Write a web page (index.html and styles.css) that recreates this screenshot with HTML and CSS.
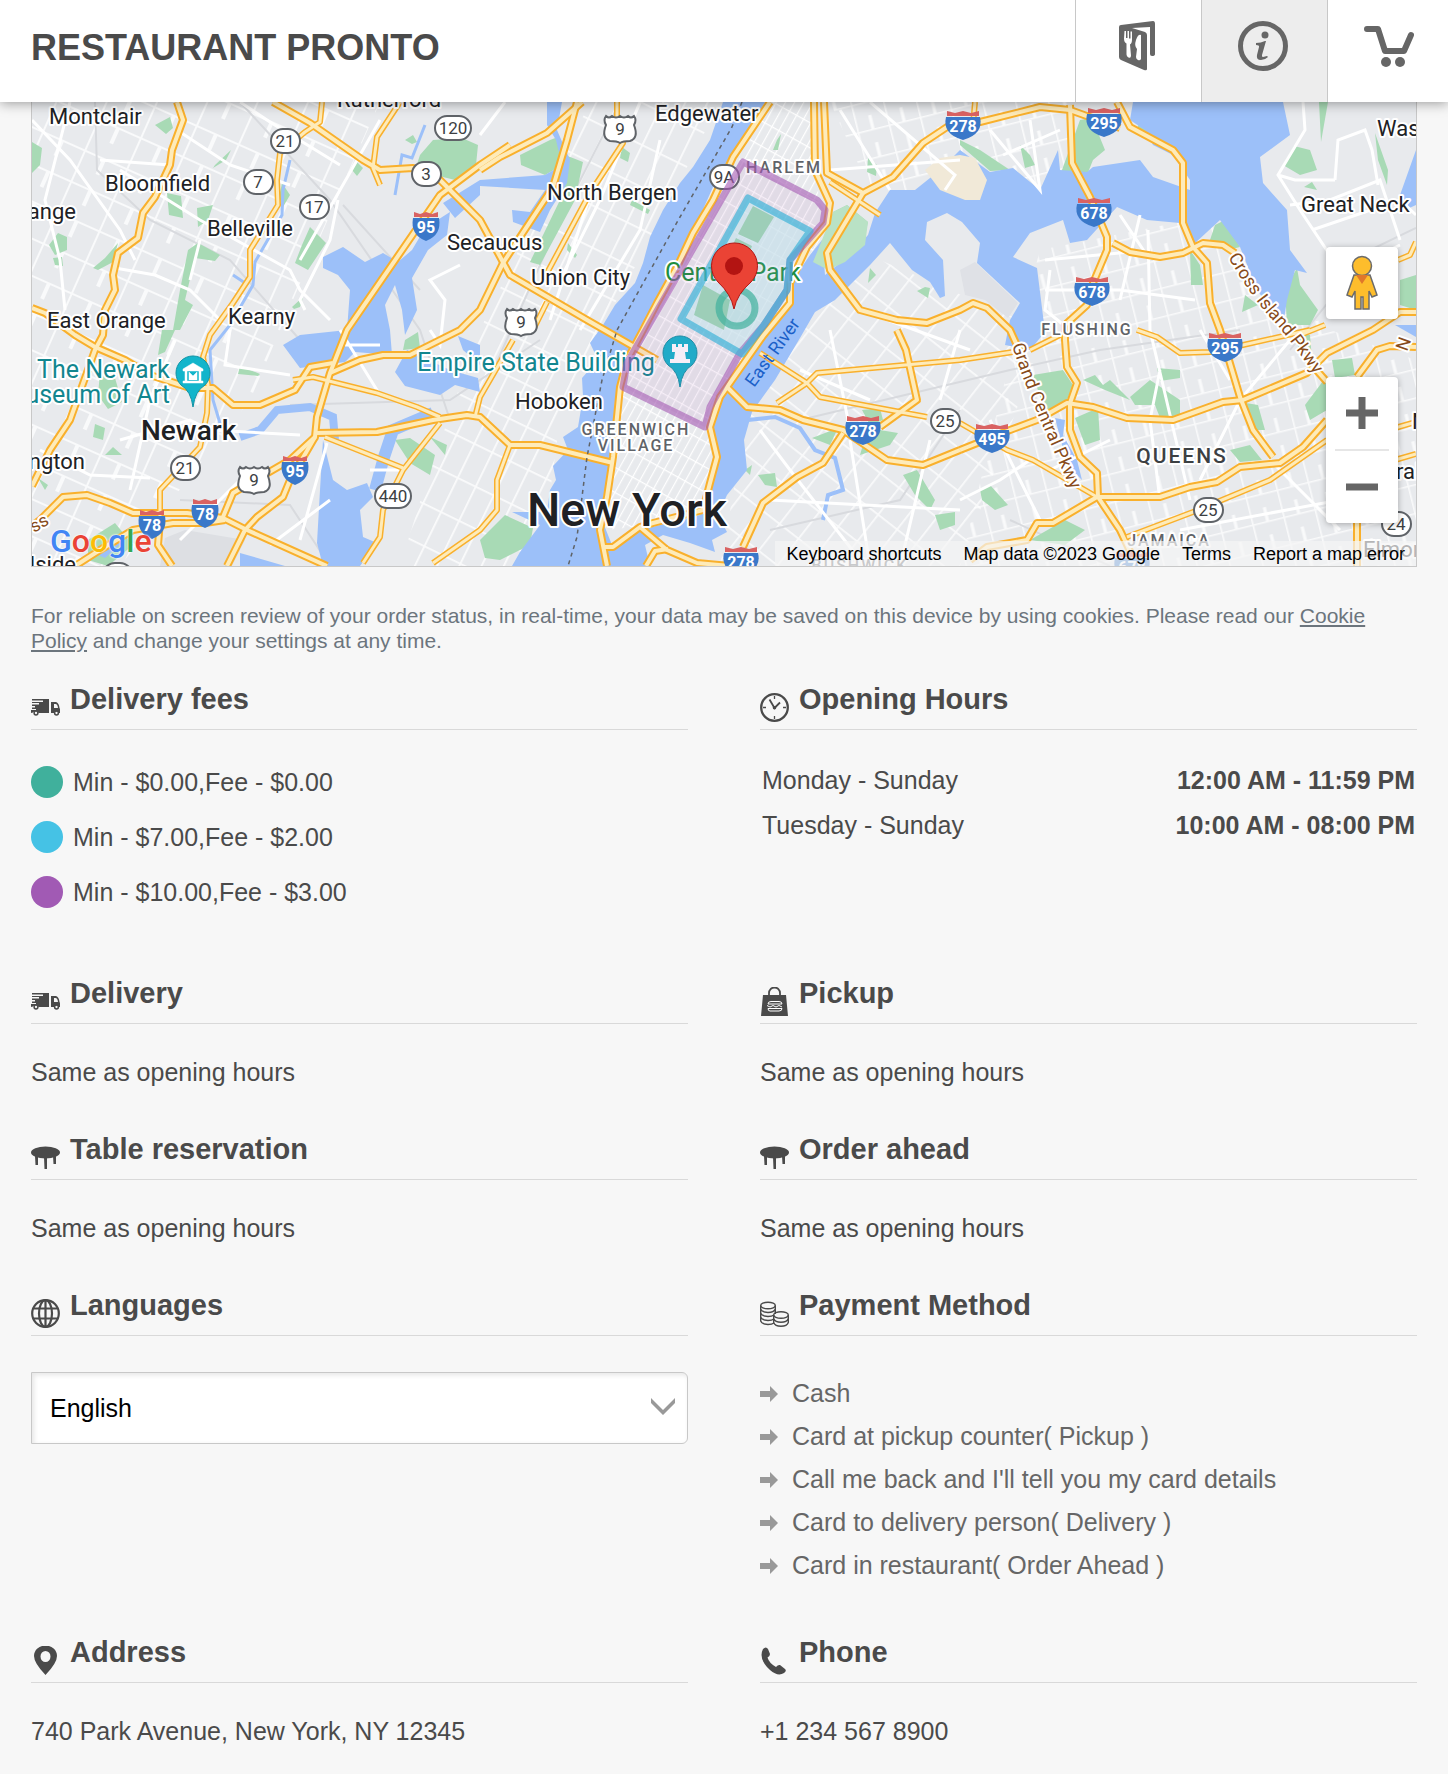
FILE: index.html
```
<!DOCTYPE html>
<html lang="en">
<head>
    <meta charset="UTF-8">
    <meta name="viewport" content="width=device-width, initial-scale=1.0">
    <title>Restaurant Pronto</title>
    <link rel="stylesheet" href="styles.css">
</head>
<body>
    <header class="top-bar">
        <h1>RESTAURANT PRONTO</h1>
        <nav class="top-nav">
            <a href="#menu" aria-label="Menu">
                <svg width="50" height="50" viewBox="0 0 50 50">
                    <path d="M7 6 Q7 4 9 4 L41 0 Q43 0 43 3 V33 Q43 35 40 35 Q38 35 38 33 V6 L20 7 L33 11 Q35 12 35 14 V48 Q35 50 32 49 L9 39 Q7 38 7 36 Z"/>
                    <path class="cut" d="M12.500 10 h1.500 v7 h1.500 v-7 h1.500 v7.500 h1.500 v-7 h1.500 v8 q0 4 -2 5 l1 11 q0 3 -2.500 2 q-2 -1 -2 -3 v-11 q-2.500 -1 -2.500 -5 z"/>
                    <path class="cut" d="M29 14 v24 q-1 2 -3 1 q-2 -1 -2 -3 l1 -8 q-3 -3 -1 -9 q2 -6 5 -5 z"/>
                </svg>
            </a>
            <a href="#info" class="active" aria-label="Info">
                <svg width="50" height="50" viewBox="0 0 50 50">
                    <circle cx="25" cy="25" r="22.500" fill="none" stroke="#666" stroke-width="5"/>
                    <circle cx="27" cy="14" r="3.500"/>
                    <path d="M18 22 q5 0 9 -2 h1 l-4 14 q-.5 2 1 2 q2 -.3 4 -1 l1 1 q-3 3 -7 3 q-5 0 -4 -5 l2 -8 q.5 -2 -3 -2 z"/>
                </svg>
            </a>
            <a href="#cart" aria-label="Cart">
                <svg width="50" height="50" viewBox="0 0 50 50">
                    <path d="M3 8 H14 L21 30 H40 L47 14" fill="none" stroke="#666" stroke-width="6" stroke-linecap="round" stroke-linejoin="round"/>
                    <circle cx="22" cy="41" r="5"/>
                    <circle cx="36" cy="41" r="5"/>
                </svg>
            </a>
        </nav>
    </header>

    <main class="container">
        <div class="map">
            <svg class="map-canvas" viewBox="32 102 1384 464" preserveAspectRatio="xMidYMid slice" role="img" aria-label="Delivery area map">
                <defs>
                    <pattern id="gridManhattan" width="8" height="22" patternUnits="userSpaceOnUse" patternTransform="rotate(29)">
                        <path d="M0 0H8M0 0V22" stroke="#fff" stroke-width="2.400"/>
                    </pattern>
                    <pattern id="gridWest" width="46" height="34" patternUnits="userSpaceOnUse" patternTransform="rotate(24)">
                        <path d="M0 0H46M0 0V34M22 0V18" stroke="#fff" stroke-width="4" fill="none"/>
                    </pattern>
                    <pattern id="gridHudson" width="20" height="38" patternUnits="userSpaceOnUse" patternTransform="rotate(26)">
                        <path d="M0 0H20M0 0V38" stroke="#fff" stroke-width="3.500" fill="none"/>
                    </pattern>
                    <pattern id="gridQueens" width="32" height="28" patternUnits="userSpaceOnUse" patternTransform="rotate(-14)">
                        <path d="M0 0H32M0 0V28M16 14V28" stroke="#fff" stroke-width="3.200" fill="none"/>
                    </pattern>
                    <pattern id="gridBrooklyn" width="24" height="34" patternUnits="userSpaceOnUse" patternTransform="rotate(38)">
                        <path d="M0 0H24M0 0V34" stroke="#fff" stroke-width="3.400" fill="none"/>
                    </pattern>
                    <!-- highways, drawn twice: casing and fill -->
                    <g id="highways">
                        <path d="M177 102 183 120 172 150 170 165 155 197 143 213 138 238 118 253 113 275 115 290 105 310 103 335 95 350 70 420 50 450 32 486"/>
                        <path d="M32 308 45 313 75 335 95 347 125 360 150 375 190 388 213 388 233 405 260 405 295 390 310 367 333 363"/>
                        <path d="M510 145 480 165 440 195 347 330 330 373 317 417 315 437 290 460 233 493 223 517"/>
                        <path d="M315 437 290 480 283 497 257 517 245 530 227 566"/>
                        <path d="M32 526 40 520 63 497 87 495 110 503 133 513 187 513 223 518 247 530 327 566"/>
                        <path d="M75 566 100 550 133 530 173 523 205 523 225 520"/>
                        <path d="M172 566 158 545 160 520"/>
                        <path d="M315 433 377 432 433 420 467 415 480 417 510 445 540 445 613 463"/>
                        <path d="M330 373 360 360 383 355 410 355 460 330 480 310 503 263 553 187 567 140 577 102"/>
                        <path d="M273 102 310 123 363 160 380 170 413 168 440 180 480 220 510 275 587 320 657 360"/>
                        <path d="M480 170 500 157 547 133 582 102"/>
                        <path d="M770 102 733 157 713 200 693 233 677 267 657 303 643 330 627 360 620 387 613 457 607 497 600 530 607 566"/>
                        <path d="M814 102 815 170 830 203 827 223 807 247 790 283 790 303 763 336 720 397 710 427 717 457 710 483 703 510 653 523 640 527 613 547 603 547"/>
                        <path d="M640 527 667 550 697 563 730 566"/>
                        <path d="M646 566 655 551 668 549"/>
                        <path d="M824 102 827 173 863 193 893 177 923 143 947 127 980 122 1040 107 1070 110 1120 128"/>
                        <path d="M863 193 827 253 830 270 860 310 897 320 927 323 960 310 973 303 987 308 1010 330 1020 352"/>
                        <path d="M1070 105 1072 163 1090 197 1107 237 1107 250 1093 283 1087 305 1065 325 1065 340 1067 367 1077 383 1070 403 1070 430 1080 457 1097 473 1098 497 1120 530 1137 566"/>
                        <path d="M1117 102 1130 127 1173 150 1183 163 1183 223 1193 247 1207 263 1210 303 1220 330 1240 397 1253 430 1273 457"/>
                        <path d="M1113 243 1130 252 1160 257 1183 253 1203 243 1223 245 1235 253"/>
                        <path d="M960 450 1010 430 1037 420 1067 403 1093 407 1127 418 1173 420 1223 402 1243 400 1307 373 1327 353 1373 330 1400 312 1416 312"/>
                        <path d="M970 560 987 547 1027 540 1037 523 1053 523 1097 497 1160 497 1190 487 1217 482 1240 467 1280 463 1303 447 1327 420"/>
                        <path d="M727 387 747 407 780 410 803 420 843 430 887 460 923 465 960 450"/>
                        <path d="M843 433 823 463 797 477 763 503 743 547"/>
                        <path d="M897 330 906 350 917 400 880 427"/>
                        <path d="M1312 365 1327 382"/>
                        <path d="M1357 377 1377 350 1390 346 1416 347M1357 523V566"/>
                    </g>
                    <g id="arterials">
                        <path d="M322 102 320 122 305 132 280 153 277 180 278 205 250 250 250 277 233 303 210 335 203 357 208 385 207 413 200 447 160 490 160 520"/>
                        <path d="M400 102 377 137 373 168 380 185"/>
                        <path d="M617 102V120L623 143 590 193 547 273"/>
                        <path d="M293 380 313 377 377 393 417 407 440 417"/>
                        <path d="M440 423 403 470 383 510 380 537 363 563M325 437 403 468"/>
                        <path d="M513 340 480 397 475 417M510 445 497 480 497 510 480 530 433 563"/>
                        <path d="M760 353 807 383 820 397 927 417M777 403 807 383 817 373 960 360 1013 352"/>
                        <path d="M960 423 1007 450 1033 460 1097 497"/>
                        <path d="M1030 350 1060 335M1137 330 1157 337 1180 353 1210 352 1243 345 1310 330"/>
                        <path d="M1127 537 1193 512 1270 480 1327 440"/>
                        <path d="M1398 260 1410 255 1416 242M1300 335 1325 325M1395 428 1416 422M1395 460 1416 454"/>
                        <path d="M830 182 880 215M975 102 973 125M533 330 547 302"/>
                    </g>
                    <g id="ushield">
                        <path d="M-14 -13 Q-11 -10 -8 -13 Q-4 -10 0 -13 Q4 -10 8 -13 Q11 -10 14 -13 Q17 -9 14 -4 Q19 9 10 12 Q3 12 0 14 Q-3 12 -10 12 Q-19 9 -14 -4 Q-17 -9 -14 -13 Z"/>
                    </g>
                    <g id="shield2">
                        <path d="M-13 -8 H13 Q16 9 0 15 Q-16 9 -13 -8 Z" fill="#3a78c9"/>
                        <path d="M-12 -9 L-12 -14 L-6 -12 L0 -14 L6 -12 L12 -14 L12 -9 Z" fill="#d96262"/>
                    </g>
                    <g id="shield3">
                        <path d="M-17 -8 H17 Q21 9 0 15 Q-21 9 -17 -8 Z" fill="#3a78c9"/>
                        <path d="M-16 -9 L-16 -14 L-8 -12 L0 -14 L8 -12 L16 -14 L16 -9 Z" fill="#d96262"/>
                    </g>
                    <rect id="pill" x="-14" y="-12" width="29" height="24" rx="12"/>
                    <rect id="pillWide" x="-18" y="-12" width="36" height="24" rx="12"/>
                    <path id="crossIsland" d="M1228 257 Q1252 298 1270 317 T1318 380"/>
                    <path id="grandCentral" d="M1012 345 C1024 385 1040 420 1072 492"/>
                </defs>

                <rect x="0" y="0" width="1500" height="700" fill="#e8eaed"/>

                <!-- street grids -->
                <path d="M32 102H380L310 260 250 400 120 566H32Z" fill="url(#gridWest)" opacity=".75"/>
                <path d="M590 102H720L650 240 600 330 560 420 540 566H400L430 470 480 330Z" fill="url(#gridHudson)" opacity=".8"/>
                <path d="M770 102H815L820 240 745 350 705 520 605 530 625 370Z" fill="url(#gridManhattan)"/>
                <path d="M830 102H1070V190H870Z" fill="url(#gridQueens)" opacity=".8"/>
                <path d="M790 330 880 260 1020 320V400L960 566H720L750 400Z" fill="url(#gridBrooklyn)" opacity=".75"/>
                <path d="M1040 250 1240 210 1330 330 1416 360V566H960L1000 400Z" fill="url(#gridQueens)" opacity=".75"/>

                <g class="rail">
                    <path d="M95 102 97 170 150 220 230 260 300 340M240 102 330 200 420 330 450 420"/>
                    <path d="M343 205 420 290M620 102 560 220 480 400M290 405 450 400 540 340M180 500 290 505 330 566"/>
                    <path d="M800 420 1010 370 1100 350 1240 330M1010 520 1110 566M1416 228 1370 250 1290 350"/>
                    <path d="M770 530 900 500 960 410"/>
                </g>

                <!-- parks -->
                <g class="park">
                    <path d="M32 142 42 148 40 165 32 173ZM155 125 170 117 173 128 166 134ZM167 193 181 196 183 218 169 215ZM197 208 213 205 208 220 198 227ZM58 233 67 237 67 250 55 255 49 245ZM53 258 62 257 63 266 55 265ZM215 165 231 150 226 160 213 168ZM188 250 198 243 220 255 215 261 195 258 185 300 193 305 180 330H173L180 290ZM93 268 105 258 118 243 113 262 98 270ZM310 227 326 243 308 270 295 263 302 245ZM282 183 290 195 283 207 279 197Z"/>
                    <path d="M433 140 462 138 478 145 476 165 455 180 415 170 420 155ZM405 140 413 135 417 142 412 144ZM357 162 363 168 357 176 352 170ZM292 307 303 297 300 307 294 309Z"/>
                    <path d="M100 372 115 378 122 402 108 409 98 395ZM95 424 105 428 103 440 93 437ZM113 447 122 455 105 455ZM240 366 260 374 258 376 238 374ZM162 330H175L165 352 158 355ZM88 540 115 523 133 545 108 566 88 560ZM38 478 48 485 45 490Z"/>
                    <path d="M405 340 418 332 420 348 403 350ZM395 440 410 438 435 455 430 475 410 463ZM430 437 447 445 445 455ZM480 540 505 515 533 528 530 545 500 560 485 558Z"/>
                    <path d="M520 155 550 140 558 137 562 165 545 175 521 165ZM565 155 583 162 575 200 540 265 530 262 560 200ZM622 147 630 153 628 162 620 158ZM632 200 650 210 648 214 630 205ZM568 243 577 255 575 258 567 250Z"/>
                    <path d="M777 140 781 134 778 150 773 150ZM868 158 877 165 876 176 867 172ZM833 212 847 205 868 222 865 235 847 247 835 232ZM813 258 825 253 828 265 818 270ZM870 268 876 275 868 283ZM925 287 930 288 928 298 917 291Z"/>
                    <path d="M1080 120 1092 118 1105 150 1093 160 1085 180 1065 200 1062 170ZM960 140 980 150 1010 170 990 171 960 145ZM1020 145 1030 155 1035 165 1025 168ZM1140 122 1150 121 1150 135 1135 132Z"/>
                    <path d="M1294 146 1310 150 1317 170 1300 175 1283 165ZM1319 102H1328L1321 142ZM1375 133 1388 170 1387 185 1378 160ZM1304 187 1312 182 1317 190ZM1215 225 1225 220 1240 247 1228 250 1210 240ZM1190 250 1200 265 1203 285 1191 285ZM1245 295 1258 305 1242 312ZM1285 290 1297 268 1300 285 1318 310 1310 325 1287 325Z"/>
                    <path d="M1033 375 1063 370 1073 385 1065 405 1045 412ZM1075 418 1098 408 1100 440 1085 445ZM1083 380 1095 375 1103 385 1110 380 1130 400 1105 390ZM1130 397 1150 380 1180 400V415L1160 418 1155 405 1135 405ZM1157 368 1180 370V378L1160 381ZM1230 450 1250 445 1262 460 1240 462ZM1305 405 1320 385 1327 375V410L1310 420ZM1332 360 1352 358 1355 375 1335 378ZM1400 280 1416 275V310L1400 305ZM980 490 990 485 1008 505 995 510 982 500ZM1030 540 1065 520 1085 530 1065 545ZM1240 402 1258 405 1265 430 1255 430Z"/>
                    <path d="M812 438 838 428 830 445ZM862 410 880 408 883 420 870 425ZM880 430 898 433 890 445 860 455 862 448ZM745 470 752 465 750 475ZM758 475 775 473 777 487 765 485ZM903 475 917 470 935 500 930 510 915 495ZM935 515 955 512V525L940 530ZM1290 330 1310 335 1312 360 1300 350Z"/>
                </g>

                <!-- water -->
                <g class="water">
                    <path d="M723 102 710 140 693 167 680 183 663 210 650 237 643 263 635 283 615 305 603 325 590 343 598 360 582 378 583 397 578 427 563 437 568 450 553 466 556 480 550 490 547 512 512 512 540 525 520 552 512 566H650L645 545 663 535 690 543 715 552 712 540 727 532 718 515 727 495 747 470 744 440 752 412 775 380 800 338 815 312 835 300 870 265 890 243 912 270 930 282 940 298 945 296 943 260 925 240 927 222 947 213 962 222 980 243 977 263 1020 303 1010 320 1005 345 1030 350 1045 332 1037 268 1013 257 1030 233 1063 220 1070 243 1087 240 1117 207 1147 220 1180 223 1193 245 1220 220 1240 247 1257 290 1283 325 1287 300 1295 270 1307 273 1290 250 1287 210 1263 183 1260 157 1290 135 1283 102H1133L1130 120 1145 130 1153 145 1173 155 1190 180 1190 190 1153 177 1140 160 1093 167 1087 172 1060 170 1058 150 1040 190 1013 168 990 172 960 150 940 170 915 190 890 190 875 213 868 235 850 255 825 275 822 240 810 255 793 280 788 305 757 350 727 387 713 407 707 430 718 455 710 490 700 515 640 530 612 545 602 520 603 500 612 450 615 400 625 370 640 335 667 290 680 253 697 223 713 187 740 147 765 102Z"/>
                    <path d="M323 257 343 247 365 262 383 253 398 262 412 250 425 228 450 212 447 235 428 250 412 278 417 310 405 335 402 310 395 285 385 305 390 330 392 355 355 352 345 362 300 368 283 345 300 335 347 330 350 290 338 275 323 268Z"/>
                    <path d="M407 350 450 370 478 378 480 392 455 385 440 395 405 386 395 372Z"/>
                    <path d="M323 440 333 480 347 490 367 483 373 497 360 510 363 537 377 543 360 566H323L317 543 320 490Z"/>
                    <path d="M443 203 480 180V195L455 218ZM458 336 480 345V365L463 350ZM547 102H562L557 130 570 160 567 183 550 210 540 232 513 222 512 210 530 212 545 190 480 186V180L545 175 562 165 556 140 547 125ZM1055 418 1065 420 1063 435 1077 460 1082 480 1072 470 1062 445ZM1400 195 1416 150V205L1405 210ZM1395 325H1416V337ZM92 552 120 538 125 540 105 558ZM240 553 285 566H240Z"/>
                </g>
                <g class="stream">
                    <path stroke-width="8" d="M240 437 260 430 277 410 310 407 333 417 335 440"/>
                    <path stroke-width="12" d="M433 413 393 430 384 457 375 490"/>
                    <path stroke-width="3" d="M425 125 412 158 402 155 395 195M290 160 283 190 282 215 255 262 253 285 230 325 210 350 213 400 222 430M233 275 248 285"/>
                    <path stroke-width="4" d="M748 420 775 417 800 428 815 450 835 458 843 490 828 495 823 520"/>
                </g>

                <!-- islands and airport -->
                <path d="M960 155 975 158 987 180 980 200 965 200 940 190 925 170 940 158Z" fill="#f1e9d8"/>
                <path d="M833 212 847 205 868 222 865 245 845 262 828 270 813 262 820 245Z" fill="#b9e2c5"/>
                <path d="M960 270 975 262 1018 303 1008 318 985 300 965 295Z" fill="#dfe1e6"/>
                <path d="M165 538 185 530 245 540 232 566H160Z" fill="#dddfe3"/>

                <!-- local streets -->
                <g class="street">
                    <path d="M32 120 70 160 120 230 135 260M70 102 45 200 60 260 65 310M100 160 170 165M120 170 200 220 290 270 300 290 330 320M180 132 230 165 290 185M240 102 270 122 340 165M200 240 190 280M115 268 155 275 190 290 220 320M380 120 300 260M338 200 330 240 300 300 305 310"/>
                    <path d="M230 330 225 365 290 375M120 440 190 420 210 430 300 435M40 450 90 475 150 478M130 490 150 400 175 340M180 540 250 470M327 443 300 540M340 330 380 395M370 470 400 470M270 545 330 500M345 345 380 345"/>
                    <path d="M480 135 505 102M430 330 440 345 445 300 430 280 460 265M640 102 600 200 560 280M660 140 640 230 580 330M590 195 550 320"/>
                    <path d="M840 110 890 190M870 102 955 175 945 190M830 170 960 160M990 130 1040 190 1030 120M1003 155 1060 130"/>
                    <path d="M1303 102 1305 130 1278 175 1300 210 1340 270M1278 175 1295 180 1335 180M1290 205 1330 200 1380 180 1400 240M1335 180 1338 140 1365 130 1372 150 1378 185M1312 230 1400 200 1416 215M1340 275 1400 245"/>
                    <path d="M1045 260 1130 252M1050 270 1045 310 1070 330M1045 290 1120 290 1195 300M1140 215 1120 300M1148 230 1150 330 1190 500M1120 215 1150 260M1160 370 1150 420 1160 500M1200 330 1230 380M1290 340 1240 400 1200 480M1270 460 1340 530M960 500 1000 480 1030 460M990 420 1020 480 1040 520M1110 440 1050 470M1180 530 1340 500"/>
                    <path d="M760 430 790 470 860 560M850 440 870 566M770 500 960 510M930 440 900 566M800 370 870 400M830 330 850 430M860 310 970 350M960 330 940 400"/>
                </g>

                <g class="casing"><use href="#arterials" stroke-width="6"/><use href="#highways" stroke-width="8"/></g>
                <g class="fill"><use href="#arterials" stroke-width="3"/><use href="#highways" stroke-width="4"/></g>
                <path d="M742 102 732 127 680 217 617 330 602 380 587 457 577 537 568 566" fill="none" stroke="#5f6368" stroke-width="1.500" stroke-dasharray="4 4"/>

                <!-- Central Park area under the labels -->
                <path d="M748 200 808 232 790 260 787 290 742 353 685 320Z" fill="#e6f7f7" fill-opacity=".6"/>
                <path d="M753 206 774 217 758 243 738 234ZM736 238 752 246 745 265 728 255ZM703 285 730 300 724 330 694 315Z" class="park"/>

                <!-- place names -->
                <g class="label">
                    <text x="49" y="124">Montclair</text>
                    <text x="105" y="191">Bloomfield</text>
                    <text x="207" y="236">Belleville</text>
                    <text x="76" y="219" text-anchor="end">Orange</text>
                    <text x="47" y="328">East Orange</text>
                    <text x="228" y="324">Kearny</text>
                    <text x="447" y="250">Secaucus</text>
                    <text x="337" y="107">Rutherford</text>
                    <text x="655" y="121">Edgewater</text>
                    <text x="547" y="200">North Bergen</text>
                    <text x="531" y="285">Union City</text>
                    <text x="515" y="409">Hoboken</text>
                    <text x="1301" y="212">Great Neck</text>
                    <text x="1377" y="136">Washington</text>
                    <text x="85" y="469" text-anchor="end">Irvington</text>
                    <text x="76" y="572" text-anchor="end">Hillside</text>
                    <text x="1396" y="479">ral Park</text>
                    <text x="1363" y="557">Elmont</text>
                    <text x="1412" y="429">New</text>
                </g>
                <g class="label label-poi">
                    <text x="37" y="378">The Newark</text>
                    <text x="170" y="403" text-anchor="end">Museum of Art</text>
                    <text x="417" y="371">Empire State Building</text>
                </g>
                <text class="label label-park" x="665" y="281">Central Park</text>
                <g class="label label-area">
                    <text x="636" y="435">GREENWICH</text>
                    <text x="636" y="451">VILLAGE</text>
                    <text x="784" y="173">HARLEM</text>
                    <text x="1087" y="335">FLUSHING</text>
                    <text x="1169" y="546">JAMAICA</text>
                    <text x="860" y="571">BUSHWICK</text>
                </g>
                <text class="label label-borough" x="1182" y="463">QUEENS</text>
                <text class="label label-town" x="141" y="440">Newark</text>
                <text class="label label-city" x="527" y="526">New York</text>
                <text class="label label-river" transform="translate(754 388) rotate(-54)">East River</text>
                <g class="label label-road">
                    <text><textPath href="#crossIsland">Cross Island Pkwy</textPath></text>
                    <text><textPath href="#grandCentral">Grand Central Pkwy</textPath></text>
                    <text transform="translate(34 533) rotate(-30)">ss</text>
                    <text transform="translate(1407 352) rotate(-70)">N</text>
                </g>

                <!-- route shields -->
                <g class="route">
                    <g transform="translate(285 141)"><use href="#pill"/><text y="6">21</text></g>
                    <g transform="translate(453 128)"><use href="#pillWide"/><text y="6">120</text></g>
                    <g transform="translate(426 174)"><use href="#pill"/><text y="6">3</text></g>
                    <g transform="translate(258 182)"><use href="#pill"/><text y="6">7</text></g>
                    <g transform="translate(314 207)"><use href="#pill"/><text y="6">17</text></g>
                    <g transform="translate(724 177)"><use href="#pill"/><text y="6">9A</text></g>
                    <g transform="translate(185 468)"><use href="#pill"/><text y="6">21</text></g>
                    <g transform="translate(393 496)"><use href="#pillWide"/><text y="6">440</text></g>
                    <g transform="translate(945 421)"><use href="#pill"/><text y="6">25</text></g>
                    <g transform="translate(1208 510)"><use href="#pill"/><text y="6">25</text></g>
                    <g transform="translate(1396 524)"><use href="#pill"/><text y="6">24</text></g>
                    <g transform="translate(620 129)"><use href="#ushield"/><text y="6">9</text></g>
                    <g transform="translate(521 322)"><use href="#ushield"/><text y="6">9</text></g>
                    <g transform="translate(254 480)"><use href="#ushield"/><text y="6">9</text></g>
                    <use href="#pill" x="117" y="575"/>
                </g>
                <g class="interstate">
                    <g transform="translate(426 226)"><use href="#shield2"/><text y="7">95</text></g>
                    <g transform="translate(295 470)"><use href="#shield2"/><text y="7">95</text></g>
                    <g transform="translate(152 524)"><use href="#shield2"/><text y="7">78</text></g>
                    <g transform="translate(205 513)"><use href="#shield2"/><text y="7">78</text></g>
                    <g transform="translate(963 125)"><use href="#shield3"/><text y="7">278</text></g>
                    <g transform="translate(863 430)"><use href="#shield3"/><text y="7">278</text></g>
                    <g transform="translate(741 561)"><use href="#shield3"/><text y="7">278</text></g>
                    <g transform="translate(1104 122)"><use href="#shield3"/><text y="7">295</text></g>
                    <g transform="translate(1225 347)"><use href="#shield3"/><text y="7">295</text></g>
                    <g transform="translate(1094 212)"><use href="#shield3"/><text y="7">678</text></g>
                    <g transform="translate(1092 291)"><use href="#shield3"/><text y="7">678</text></g>
                    <g transform="translate(992 438)"><use href="#shield3"/><text y="7">495</text></g>
                    <g transform="translate(1132 566)"><use href="#shield3"/><text y="7">678</text></g>
                </g>

                <!-- points of interest -->
                <g transform="translate(193 373)">
                    <path d="M0 34 Q-2 18 -12 12 A17 17 0 1 1 12 12 Q2 18 0 34Z" fill="#12b5cb" stroke="#1093a5"/>
                    <path d="M-10 -4 0 -10 10 -4V-2H-10ZM-8 -2H-6V8H-8ZM6 -2H8V8H6ZM-10 8H10V10H-10ZM-4 7V-1L0 3 4 -1V7" fill="#fff" stroke="#fff" stroke-width=".500"/>
                </g>
                <g transform="translate(680 353)">
                    <path d="M0 34 Q-2 18 -12 12 A17 17 0 1 1 12 12 Q2 18 0 34Z" fill="#12b5cb" stroke="#1093a5"/>
                    <path d="M-8 -9H-4V-6H-2V-9H2V-6H4V-9H8V-1H5L6 6H10V10H-10V6H-6L-5 -1H-8Z" fill="#fff"/>
                </g>

                <!-- delivery zones -->
                <g stroke-width="7" stroke-linejoin="round">
                    <path d="M743 162 817 200 825 210 823 223 808 240 790 260 787 290 764 325 740 353 710 407 705 427 623 387 627 363Z" fill="#a359b3" fill-opacity=".1" stroke="#a359b3" stroke-opacity=".6"/>
                    <path d="M748 198 810 231 790 260 787 290 764 325 742 354 681 319Z" fill="#45e2e5" fill-opacity=".1" stroke="#3fb4d8" stroke-opacity=".7"/>
                    <circle cx="737" cy="308" r="18" fill="#40b09c" fill-opacity=".1" stroke="#40b09c" stroke-opacity=".7"/>
                </g>
                <path d="M734 309 Q731 294 718 282 A23 23 0 1 1 751 282 Q737 294 734 309Z" fill="#ea4335" stroke="#b31412"/>
                <circle cx="734" cy="266" r="9" fill="#b31412"/>
            </svg>

            <a class="map-logo" href="#google"><span class="g-blue">G</span><span class="g-red">o</span><span class="g-yellow">o</span><span class="g-blue">g</span><span class="g-green">l</span><span class="g-red">e</span></a>

            <div class="map-controls">
                <button type="button" class="map-btn pegman" aria-label="Street View">
                    <svg width="32" height="56" viewBox="0 0 32 56">
                        <path d="M8 20H24L31 40 26 42 23 36V54H17V42H15V54H9V36L6 42 1 40Z" fill="#fdbd2c" stroke="#6b6b6b" stroke-width="1.500"/>
                        <circle cx="16" cy="11" r="9.500" fill="#fdbd2c" stroke="#6b6b6b" stroke-width="1.500"/>
                        <path d="M10 20H22L16 29Z" fill="#e0772a"/>
                    </svg>
                </button>
                <div class="zoom-box">
                    <button type="button" class="map-btn" aria-label="Zoom in">
                        <svg width="32" height="32" viewBox="0 0 32 32"><path d="M0 12.500H12.500V0H19.500V12.500H32V19.500H19.500V32H12.500V19.500H0Z"/></svg>
                    </button>
                    <span class="zoom-line"></span>
                    <button type="button" class="map-btn" aria-label="Zoom out">
                        <svg width="32" height="32" viewBox="0 0 32 32"><path d="M0 12.500H32V19.500H0Z"/></svg>
                    </button>
                </div>
            </div>

            <div class="map-footer">
                <button type="button">Keyboard shortcuts</button>
                <span>Map data ©2023 Google</span>
                <a href="#terms">Terms</a>
                <a href="#report">Report a map error</a>
            </div>
        </div>

        <p class="cookie-note">For reliable on screen review of your order status, in real-time, your data may be saved on this device by using cookies. Please read our <a href="#cookies">Cookie Policy</a> and change your settings at any time.</p>

        <div class="info-grid">
            <section>
                <h2>
                    <svg class="icon" viewBox="0 0 29 29"><use href="#icon-truck"/></svg>
                    Delivery fees
                </h2>
                <ul class="fees">
                    <li><span class="dot dot-green"></span>Min - $0.00,Fee - $0.00</li>
                    <li><span class="dot dot-blue"></span>Min - $7.00,Fee - $2.00</li>
                    <li><span class="dot dot-purple"></span>Min - $10.00,Fee - $3.00</li>
                </ul>
            </section>
            <section>
                <h2>
                    <svg class="icon" viewBox="0 0 29 29">
                        <circle cx="14.500" cy="14.500" r="13.300" fill="none" stroke="#4a4a4a" stroke-width="2.300"/>
                        <path d="M14.500 3V6M14.500 23V26M3 14.500H6M23 14.500H26" stroke="#4a4a4a" stroke-width="1.300"/>
                        <path d="M9.500 6.500 14.500 15 20 9.500" fill="none" stroke="#4a4a4a" stroke-width="1.800"/>
                        <circle cx="14.500" cy="14.800" r="1.800"/>
                    </svg>
                    Opening Hours
                </h2>
                <table class="hours">
                    <tr><th scope="row">Monday - Sunday</th><td>12:00 AM - 11:59 PM</td></tr>
                    <tr><th scope="row">Tuesday - Sunday</th><td>10:00 AM - 08:00 PM</td></tr>
                </table>
            </section>

            <section>
                <h2>
                    <svg class="icon" viewBox="0 0 29 29">
                        <g id="icon-truck">
                            <path d="M1 6H18V20H7.500A3 3 0 0 0 2 19.500L0 20V17H5V16H1V14.500H4V13H1V11.500H8V10H1V9H12V7.500H1Z"/>
                            <circle cx="5" cy="20" r="1.900" fill="none" stroke="#4a4a4a" stroke-width="1.500"/>
                            <path fill-rule="evenodd" d="M20 9H25Q28 10 28.500 15L29 16V20H27.500A2.500 2.500 0 0 0 23 20H20ZM23 11V15H27Q26.500 11 24.500 11Z"/>
                            <circle cx="25.500" cy="20" r="1.900" fill="none" stroke="#4a4a4a" stroke-width="1.500"/>
                        </g>
                    </svg>
                    Delivery
                </h2>
                <p>Same as opening hours</p>
            </section>
            <section>
                <h2>
                    <svg class="icon" viewBox="0 0 29 29">
                        <path d="M9 8V6A5.500 5.500 0 0 1 20 6V8" fill="none" stroke="#4a4a4a" stroke-width="1.800"/>
                        <path d="M3 8H26L28 29H1Z"/>
                        <path d="M8 17Q8 14.500 11 14.500H19Q22 14.500 22 17ZM7 18.500 10 20 13 18.500 16 20 19 18.500 22 20M8 21.500H22Q22 24 19 24H10Q8 24 8 21.500Z" fill="none" stroke="#fff" stroke-width="1"/>
                    </svg>
                    Pickup
                </h2>
                <p>Same as opening hours</p>
            </section>

            <section>
                <h2>
                    <svg class="icon" viewBox="0 0 29 29"><use href="#icon-table"/></svg>
                    Table reservation
                </h2>
                <p>Same as opening hours</p>
            </section>
            <section>
                <h2>
                    <svg class="icon" viewBox="0 0 29 29">
                        <g id="icon-table">
                            <ellipse cx="14.500" cy="9.500" rx="14.500" ry="6"/>
                            <path d="M4 13H7V22H4.500ZM13 14H16V26H13.500ZM22 13H25V21H22.500Z"/>
                        </g>
                    </svg>
                    Order ahead
                </h2>
                <p>Same as opening hours</p>
            </section>

            <section>
                <h2>
                    <svg class="icon" viewBox="0 0 29 29">
                        <g fill="none" stroke="#4a4a4a" stroke-width="2.200">
                            <circle cx="14.500" cy="14.500" r="13.300"/>
                            <ellipse cx="14.500" cy="14.500" rx="6.500" ry="13.300"/>
                            <path d="M14.500 1V28M3 9.500H26M3 19.500H26"/>
                        </g>
                    </svg>
                    <label for="language">Languages</label>
                </h2>
                <div class="select-box">
                    <select id="language">
                        <option>English</option>
                    </select>
                    <svg width="24" height="17" viewBox="0 0 24 17"><path d="M0 0 12 12 24 0V5L12 17 0 5Z"/></svg>
                </div>
            </section>
            <section>
                <h2>
                    <svg class="icon" viewBox="0 0 29 29">
                        <g fill="none" stroke="#4a4a4a" stroke-width="1.400">
                            <ellipse cx="8" cy="6.500" rx="7.300" ry="3.300"/>
                            <path d="M.700 6.500V22Q2 25.500 8 25.500Q12 25.500 14 24M15.300 6.500V15M.700 10Q2 13.500 8 13.500T15.300 10M.700 14Q2 17.500 8 17.500Q12 17.500 14 16M.700 18Q2 21.500 8 21.500Q12 21.500 14 20"/>
                            <ellipse cx="21" cy="16" rx="7.300" ry="3.300"/>
                            <path d="M13.700 16V23.500Q15 27.300 21 27.300T28.300 23.500V16M13.700 19.500Q15 23.300 21 23.300T28.300 19.500"/>
                        </g>
                    </svg>
                    Payment Method
                </h2>
                <ul class="payments">
                    <li><svg width="18" height="16" viewBox="0 0 18 16"><path id="arrow" d="M0 5H10V0L18 8 10 16V11H0Z"/></svg>Cash</li>
                    <li><svg width="18" height="16" viewBox="0 0 18 16"><use href="#arrow"/></svg>Card at pickup counter( Pickup )</li>
                    <li><svg width="18" height="16" viewBox="0 0 18 16"><use href="#arrow"/></svg>Call me back and I'll tell you my card details</li>
                    <li><svg width="18" height="16" viewBox="0 0 18 16"><use href="#arrow"/></svg>Card to delivery person( Delivery )</li>
                    <li><svg width="18" height="16" viewBox="0 0 18 16"><use href="#arrow"/></svg>Card in restaurant( Order Ahead )</li>
                </ul>
            </section>

            <section>
                <h2>
                    <svg class="icon" viewBox="0 0 29 29">
                        <path fill-rule="evenodd" d="M14.500 29Q3 17 3 10A11 10 0 0 1 26 10Q26 17 14.500 29ZM14.500 5A5 5.500 0 1 0 14.500 16A5 5.500 0 1 0 14.500 5Z"/>
                    </svg>
                    Address
                </h2>
                <p>740 Park Avenue, New York, NY 12345</p>
            </section>
            <section>
                <h2>
                    <svg class="icon" viewBox="0 0 29 29">
                        <path d="M3 3Q6 0 8 3L10 8Q10 10 7.500 11.500Q9 17 16 21Q18 18.500 20 19L25 23Q27 25 24 27Q18 31 10 24Q-2 13 3 3Z"/>
                    </svg>
                    Phone
                </h2>
                <p>+1 234 567 8900</p>
            </section>
        </div>
    </main>
</body>
</html>
```
FILE: styles.css
```
* {
    box-sizing: border-box;
}
body {
    margin: 0;
    background-color: #f7f7f7;
    color: #4a4a4a;
    font-family: "Liberation Sans", Arial, sans-serif;
    font-size: 25px;
    line-height: 30px;
}
h1, h2, p, ul {
    margin: 0;
    padding: 0;
}
ul {
    list-style: none;
}
svg {
    display: block;
    flex-shrink: 0;
}
button {
    padding: 0;
    border: none;
    background: none;
    font: inherit;
    color: inherit;
    cursor: pointer;
}

/* header */
.top-bar {
    position: sticky;
    top: 0;
    z-index: 10;
    display: flex;
    justify-content: space-between;
    height: 102px;
    background-color: white;
    box-shadow: 0 1px 12px rgba(0,0,0,0.4);
}
.top-bar h1 {
    padding: 28px 0 0 31px;
    font-size: 36px;
    line-height: 40px;
}
.top-nav {
    display: flex;
}
.top-nav a {
    display: flex;
    justify-content: center;
    width: 126px;
    padding: 21px 4px 0 0;
    border-left: 1px solid #c8c8c8;
    fill: #666;
}
.top-nav a:last-child {
    width: 121px;
    padding: 21px 0 0 2px;
}
.top-nav .active {
    background-color: #ededed;
}
.top-nav .cut {
    fill: white;
}

.container {
    padding: 0 31px 28px;
}

/* map */
.map {
    position: relative;
    height: 465px;
    border: 1px solid #c8c8c8;
    border-top: none;
    overflow: hidden;
    font-family: Roboto, sans-serif;
}
.map-canvas {
    width: 100%;
    height: 100%;
}
.park {
    fill: #a8dab5;
}
.water {
    fill: #9cc0f9;
}
.stream {
    fill: none;
    stroke: #9cc0f9;
}
.rail {
    fill: none;
    stroke: #d8dade;
    stroke-width: 2;
}
.street {
    fill: none;
    stroke: white;
    stroke-width: 3;
}
.casing {
    fill: none;
    stroke: #f9b02c;
    stroke-linejoin: round;
}
.fill {
    fill: none;
    stroke: #feebb9;
    stroke-linejoin: round;
}
.label {
    font-size: 22px;
    fill: #202124;
    stroke: white;
    stroke-width: 4px;
    stroke-linejoin: round;
    paint-order: stroke;
}
.label-poi {
    font-size: 25px;
    fill: #12868f;
}
.label-park {
    font-size: 25px;
    fill: #1e8e3e;
}
.label-area {
    font-size: 16px;
    font-weight: 500;
    letter-spacing: 2px;
    text-anchor: middle;
    fill: #5f6368;
}
.label-borough {
    font-size: 21px;
    font-weight: 500;
    letter-spacing: 2px;
    text-anchor: middle;
    fill: #3c4043;
}
.label-town {
    font-size: 28px;
    font-weight: 500;
}
.label-city {
    font-size: 47px;
    font-weight: 500;
}
.label-river {
    font-size: 18px;
    fill: #1a5fc8;
    stroke: none;
}
.label-road {
    font-size: 18px;
    fill: #874b1a;
}
.route {
    fill: white;
    stroke: #5f6368;
    stroke-width: 2px;
}
.route text {
    font-size: 17px;
    text-anchor: middle;
    fill: #3c4043;
    stroke: none;
}
.interstate text {
    font-size: 16px;
    font-weight: bold;
    text-anchor: middle;
    fill: white;
}
.map-logo {
    position: absolute;
    left: 18px;
    bottom: 8px;
    font-size: 32px;
    font-weight: 500;
    line-height: 34px;
    text-decoration: none;
    text-shadow: 0 0 2px white, 0 0 2px white;
}
.g-blue {
    color: #4285f4;
}
.g-red {
    color: #ea4335;
}
.g-yellow {
    color: #fbbc05;
}
.g-green {
    color: #34a853;
}
.map-controls {
    position: absolute;
    right: 18px;
    bottom: 43px;
    display: flex;
    flex-direction: column;
    gap: 58px;
}
.map-btn {
    display: flex;
    align-items: center;
    justify-content: center;
    width: 72px;
    height: 72px;
    fill: #666;
}
.pegman,
.zoom-box {
    background-color: white;
    border-radius: 4px;
    box-shadow: 0 1px 6px rgba(0,0,0,0.3);
}
.zoom-line {
    display: block;
    height: 2px;
    margin: 0 9px;
    background-color: #e6e6e6;
}
.map-footer {
    position: absolute;
    right: 0;
    bottom: 0;
    display: flex;
    height: 25px;
    background-color: rgba(245,245,245,0.7);
    color: black;
    font-family: "Liberation Sans", Arial, sans-serif;
    font-size: 18px;
    line-height: 26px;
}
.map-footer > * {
    padding: 0 11px;
    color: black;
    text-decoration: none;
}

.cookie-note {
    margin: 36px 0 29px;
    color: #6c757d;
    font-size: 21px;
    line-height: 25px;
}
.cookie-note a {
    color: inherit;
}

/* info sections */
.info-grid {
    display: grid;
    grid-template-columns: 1fr 1fr;
    gap: 45px 72px;
}
.info-grid h2 {
    display: flex;
    align-items: flex-start;
    gap: 10px;
    height: 48px;
    margin-bottom: 33px;
    border-bottom: 1px solid #d9d9d9;
    font-size: 29px;
    line-height: 34px;
}
.icon {
    width: 29px;
    height: 29px;
    margin-top: 11px;
    fill: #4a4a4a;
}
.fees {
    display: flex;
    flex-direction: column;
    gap: 23px;
    padding: 3px 0 23px;
}
.fees li {
    display: flex;
    align-items: center;
    gap: 10px;
    line-height: 32px;
}
.dot {
    width: 32px;
    height: 32px;
    border-radius: 50%;
}
.dot-green {
    background-color: #40b09c;
}
.dot-blue {
    background-color: #45c2e5;
}
.dot-purple {
    background-color: #a15ab4;
}
.hours {
    width: 100%;
    border-collapse: collapse;
}
.hours th,
.hours td {
    padding: 2px 2px 13px;
    font-weight: normal;
    text-align: left;
}
.hours td {
    font-weight: bold;
    text-align: right;
}
.select-box {
    position: relative;
    padding-top: 3px;
}
.select-box select {
    display: block;
    width: 100%;
    height: 72px;
    padding: 0 18px;
    border: 1px solid #c8c8c8;
    border-radius: 0 6px 6px 0;
    background-color: white;
    box-shadow: inset 2px 2px 5px rgba(0,0,0,0.1);
    color: black;
    font: inherit;
    appearance: none;
}
.select-box svg {
    position: absolute;
    top: 29px;
    right: 13px;
    fill: #999;
    pointer-events: none;
}
.payments {
    padding: 3px 0;
    color: #666;
    line-height: 43px;
}
.payments li {
    display: flex;
    align-items: center;
    gap: 14px;
}
.payments svg {
    fill: #999;
}
```
